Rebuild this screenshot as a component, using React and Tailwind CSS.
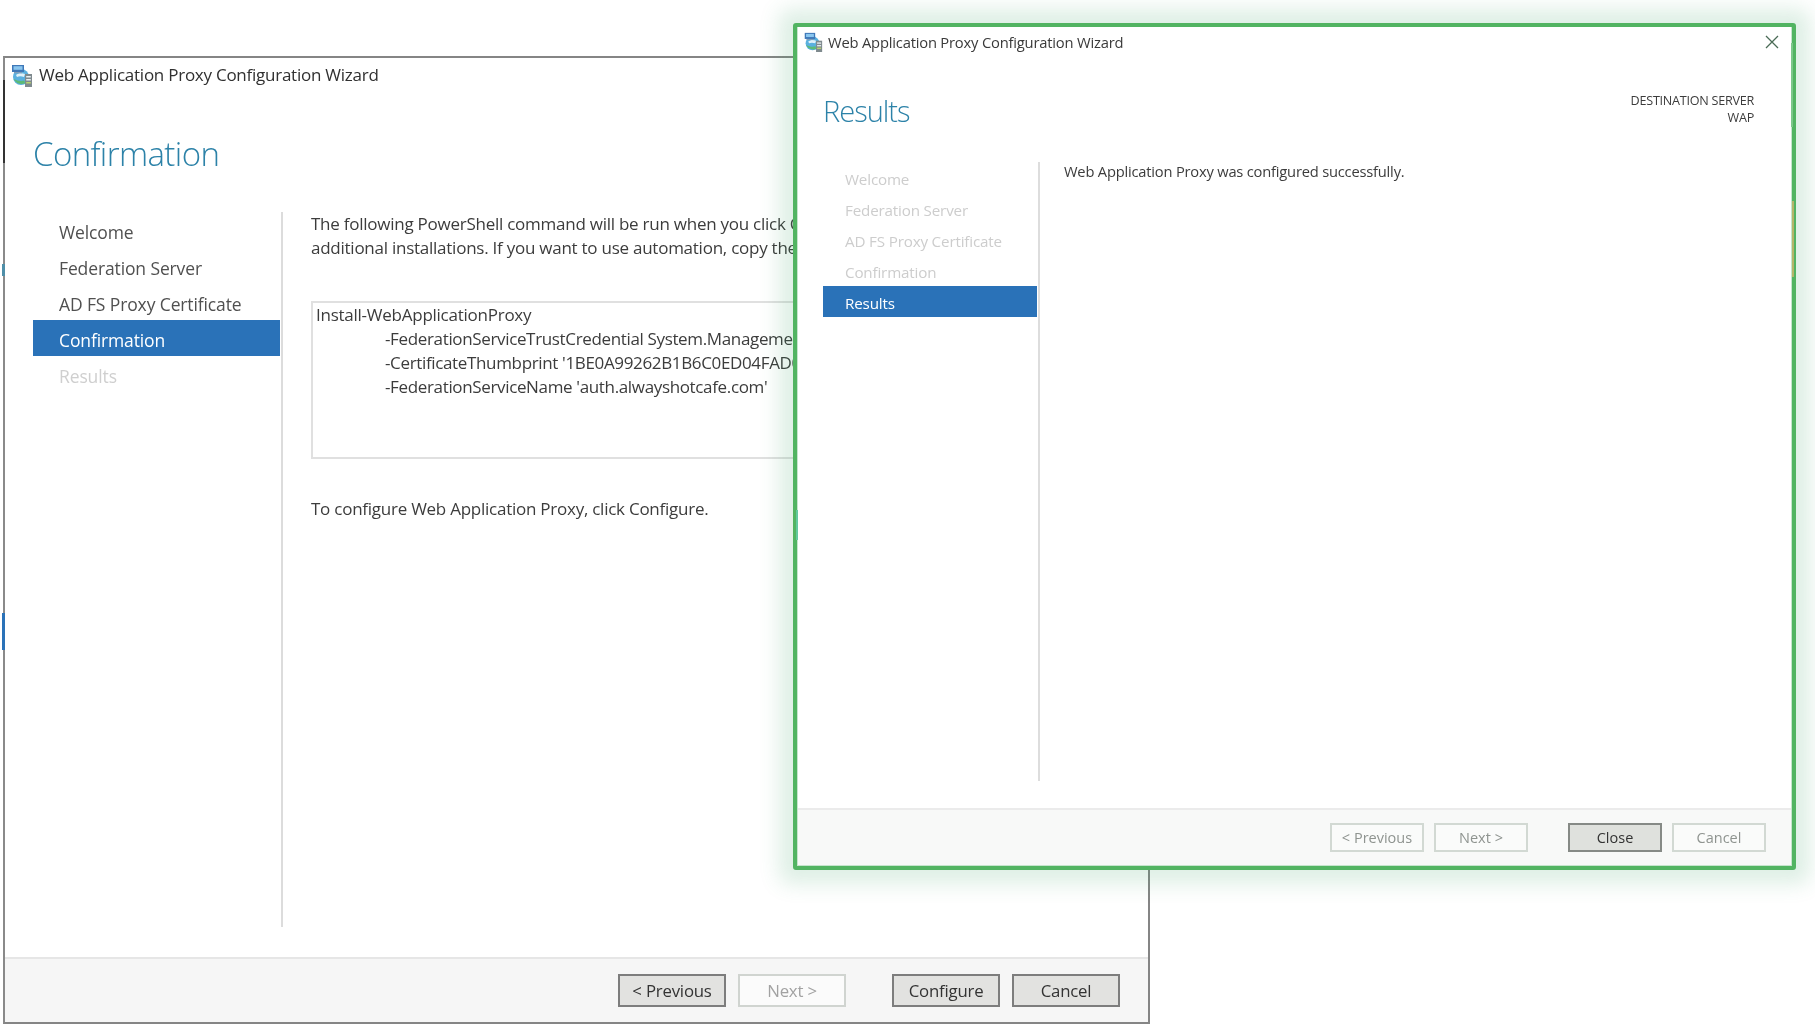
const font = { fontFamily: '"Open Sans", "Noto Sans", sans-serif' };

function WizardIcon({ className }) {
  return (
    <svg viewBox="0 0 23 23" className={className}>
      <circle cx="11" cy="13" r="8" fill="#5ab0df" />
      <path d="M3.5 15c2 4 7 6 11.500 4.500l-.5-3c-3.500 1-7 .5-11-1.500z" fill="#5cba76" />
      <path d="M6 11c2-2 6-2.500 9-1l-1 3c-2.500-1-5-1-7 0z" fill="#dff1fa" />
      <rect x="2" y="1" width="12" height="7" fill="#3f78b8" />
      <rect x="3.500" y="2.200" width="9" height="3.600" fill="#8ac6ef" />
      <rect x="4" y="8" width="8" height="1.300" fill="#7f9cb8" />
      <rect x="15" y="10" width="7" height="13" fill="#7f8a8e" />
      <rect x="16.200" y="12" width="4.600" height="1.500" fill="#e8eef0" />
      <rect x="16.200" y="15" width="4.600" height="1.500" fill="#e8eef0" />
      <rect x="16.200" y="18" width="4.600" height="1.500" fill="#b9d36c" />
    </svg>
  );
}

function BackButton({ children, disabled }) {
  return disabled ? (
    <div className="w-[108px] h-[33px] flex items-center justify-center border-2 border-[#d0d4d0] bg-[#fbfbfb] text-[#a2a2a2] text-[16.8px] tracking-[-0.2px]">{children}</div>
  ) : (
    <div className="w-[108px] h-[33px] flex items-center justify-center border-2 border-[#7d7d7d] bg-[#e2e2e0] text-[#333333] text-[16.8px] tracking-[-0.2px]">{children}</div>
  );
}

function FrontButton({ children, disabled }) {
  return disabled ? (
    <div className="w-[94px] h-[29px] flex items-center justify-center border-2 border-[#d2d9d3] bg-[#fafbfa] text-[#8f9490] text-[14.5px]">{children}</div>
  ) : (
    <div className="w-[94px] h-[29px] flex items-center justify-center border-2 border-[#868a86] bg-[#dfe1dd] text-[#333333] text-[14.5px]">{children}</div>
  );
}

function BackWindow() {
  const nav = ["Welcome", "Federation Server", "AD FS Proxy Certificate"];
  return (
    <div className="absolute left-[3px] top-[56px] w-[1147px] h-[968px] border-2 border-[#858585] border-l-[#8a8a8a] bg-white flex flex-col overflow-hidden">
      <div className="h-[34px] shrink-0 flex items-center pl-[5px] gap-[6px] text-[#303030] text-[17px] tracking-[-0.25px]">
        <WizardIcon className="w-[23px] h-[23px]" />
        <span>Web Application Proxy Configuration Wizard</span>
      </div>
      <div className="mt-[39px] ml-[28px] h-[46px] leading-[46px] text-[33px] font-light text-[#2c82a8] tracking-[-0.6px]">Confirmation</div>
      <div className="mt-[35px] flex h-[715px] pl-[28px]">
        <div className="w-[247px] shrink-0 text-[17.5px] text-[#505050] tracking-[-0.12px]">
          {nav.map((n) => (
            <div key={n} className="h-9 flex items-center pl-[26px] pt-1">{n}</div>
          ))}
          <div className="h-9 flex items-center pl-[26px] pt-1 bg-[#2a72b8] text-white">Confirmation</div>
          <div className="h-9 flex items-center pl-[26px] pt-1 text-[#cfcfcf]">Results</div>
        </div>
        <div className="ml-[1px] w-[2px] shrink-0 bg-[#dcdcdc]" />
        <div className="ml-[28px] flex-1 min-w-0 text-[17px] text-[#3c3c3c] leading-6 tracking-[-0.25px] whitespace-nowrap">
          <div>The following PowerShell command will be run when you click Configure.</div>
          <div>additional installations. If you want to use automation, copy the</div>
          <div className="mt-[41px] h-[158px] w-[800px] border-2 border-[#e0e0e0] pl-[3px]">
            <div>Install-WebApplicationProxy</div>
            <div className="pl-[69px] tracking-[-0.35px]">-FederationServiceTrustCredential System.Management.Automation</div>
            <div className="pl-[69px] tracking-[-0.35px]">-CertificateThumbprint '1BE0A99262B1B6C0ED04FAD0A1B2C3D4'</div>
            <div className="pl-[69px] tracking-[-0.35px]">-FederationServiceName 'auth.alwayshotcafe.com'</div>
          </div>
          <div className="mt-[38px]">To configure Web Application Proxy, click Configure.</div>
        </div>
      </div>
      <div className="mt-auto h-[65px] shrink-0 border-t-2 border-[#e6e6e6] bg-[#f6f6f6] flex items-start justify-end pt-[15px] pr-[28px]">
        <BackButton>&lt; Previous</BackButton>
        <div className="ml-3"><BackButton disabled>Next &gt;</BackButton></div>
        <div className="ml-[46px]"><BackButton>Configure</BackButton></div>
        <div className="ml-3"><BackButton>Cancel</BackButton></div>
      </div>
    </div>
  );
}

function FrontWindow() {
  const nav = ["Welcome", "Federation Server", "AD FS Proxy Certificate", "Confirmation"];
  return (
    <div className="absolute left-[793px] top-[23px] w-[1003px] h-[847px] border-4 border-[#52b462] rounded-[3px] bg-white overflow-hidden shadow-[0_0_20px_14px_rgba(60,160,100,0.17)]">
      <div className="h-full flex flex-col border border-t-0 border-[#c6e5cd]">
        <div className="h-[30px] shrink-0 flex items-center justify-between pl-[5px] pr-[12px]">
          <div className="flex items-center gap-[5px] text-[#3a3a3a] text-[14.75px] tracking-[-0.2px]">
            <WizardIcon className="w-5 h-5" />
            <span>Web Application Proxy Configuration Wizard</span>
          </div>
          <svg viewBox="0 0 14 14" className="w-[14px] h-[14px]" stroke="#4a6b56" strokeWidth="1.3" fill="none">
            <path d="M1 1l12 12M13 1L1 13" />
          </svg>
        </div>
        <div className="mt-[34px] flex items-start justify-between pl-[25px] pr-[37px]">
          <div className="h-10 leading-10 text-[29px] font-light text-[#2c82a8] tracking-[-1px]">Results</div>
          <div className="mt-[2px] text-right text-[12.6px] leading-[16.5px] text-[#3c3c3c] tracking-[-0.25px]">
            <div>DESTINATION SERVER</div>
            <div>WAP</div>
          </div>
        </div>
        <div className="mt-[31px] flex h-[619px] pl-[25px]">
          <div className="w-[214px] shrink-0 text-[15.2px] text-[#cdcdcd] tracking-[-0.17px]">
            {nav.map((n) => (
              <div key={n} className="h-[31px] flex items-center pl-[22px] pt-[3px]">{n}</div>
            ))}
            <div className="h-[31px] flex items-center pl-[22px] pt-[3px] bg-[#2a72b8] text-white">Results</div>
          </div>
          <div className="ml-[1px] w-[2px] shrink-0 bg-[#dddddd]" />
          <div className="ml-[24px] -mt-px text-[14.7px] leading-5 text-[#3c3c3c] tracking-[-0.2px]">Web Application Proxy was configured successfully.</div>
        </div>
        <div className="mt-auto h-[57px] shrink-0 border-t-2 border-[#ebebeb] bg-[#f8f9f8] flex items-start justify-end pt-[13px] pr-[25px]">
          <FrontButton disabled>&lt; Previous</FrontButton>
          <div className="ml-[10px]"><FrontButton disabled>Next &gt;</FrontButton></div>
          <div className="ml-[40px]"><FrontButton>Close</FrontButton></div>
          <div className="ml-[10px]"><FrontButton disabled>Cancel</FrontButton></div>
        </div>
      </div>
    </div>
  );
}

export default function App() {
  return (
    <div className="relative w-[1815px] h-[1026px] overflow-hidden bg-white blur-[0.45px]" style={font}>
      <BackWindow />
      <FrontWindow />
      <div className="absolute left-[3px] top-[80px] w-[2px] h-[83px] bg-[#333333]" />
      <div className="absolute left-[2px] top-[264px] w-[3px] h-[12px] bg-[#4f8fa8]" />
      <div className="absolute left-[2px] top-[613px] w-[3px] h-[37px] bg-[#2a72b8]" />
      <div className="absolute left-[1792px] top-[201px] w-[2px] h-[76px] bg-[#b5b56a]" />
      <div className="absolute left-[1791px] top-[43px] w-[2px] h-[84px] bg-[#7cc78a]" />
      <div className="absolute left-[796px] top-[510px] w-[2px] h-[30px] bg-[#62c9a0]" />
    </div>
  );
}
